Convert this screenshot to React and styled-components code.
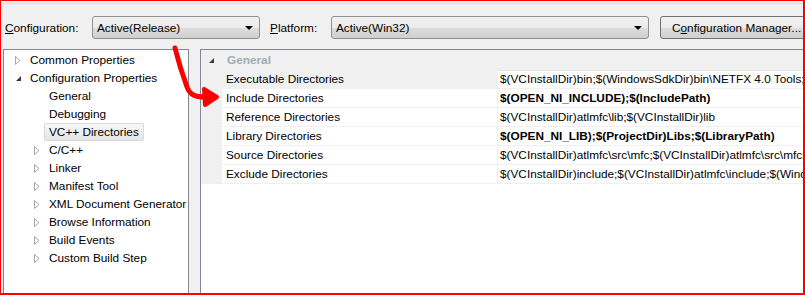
import React from 'react';
import styled, { createGlobalStyle } from 'styled-components';

const GlobalStyle = createGlobalStyle`
  html, body {
    margin: 0;
    padding: 0;
    background: #f0f0f0;
  }
`;

const treeItems = [
  { label: 'Common Properties', level: 0, state: 'collapsed' },
  { label: 'Configuration Properties', level: 0, state: 'expanded' },
  { label: 'General', level: 1 },
  { label: 'Debugging', level: 1 },
  { label: 'VC++ Directories', level: 1, selected: true },
  { label: 'C/C++', level: 1, state: 'collapsed' },
  { label: 'Linker', level: 1, state: 'collapsed' },
  { label: 'Manifest Tool', level: 1, state: 'collapsed' },
  { label: 'XML Document Generator', level: 1, state: 'collapsed' },
  { label: 'Browse Information', level: 1, state: 'collapsed' },
  { label: 'Build Events', level: 1, state: 'collapsed' },
  { label: 'Custom Build Step', level: 1, state: 'collapsed' },
];

const props = [
  {
    name: 'Executable Directories',
    value:
      '$(VCInstallDir)bin;$(WindowsSdkDir)bin\\NETFX 4.0 Tools;$(WindowsSdkDir)bin;$(VSInstallDir)Common7\\Tools\\bin;',
    current: true,
  },
  { name: 'Include Directories', value: '$(OPEN_NI_INCLUDE);$(IncludePath)', bold: true },
  { name: 'Reference Directories', value: '$(VCInstallDir)atlmfc\\lib;$(VCInstallDir)lib' },
  { name: 'Library Directories', value: '$(OPEN_NI_LIB);$(ProjectDir)Libs;$(LibraryPath)', bold: true },
  {
    name: 'Source Directories',
    value: '$(VCInstallDir)atlmfc\\src\\mfc;$(VCInstallDir)atlmfc\\src\\mfcm;$(VCInstallDir)atlmfc\\src\\atl;',
  },
  {
    name: 'Exclude Directories',
    value: '$(VCInstallDir)include;$(VCInstallDir)atlmfc\\include;$(WindowsSdkDir)include;',
  },
];

function Expander({ state }) {
  if (state === 'expanded') {
    return (
      <ExpanderBox>
        <svg width="7" height="7" viewBox="0 0 7 7">
          <polygon points="6,1 6,6 1,6" fill="#3a3a3a" />
        </svg>
      </ExpanderBox>
    );
  }
  if (state === 'collapsed') {
    return (
      <ExpanderBox>
        <svg width="6" height="9" viewBox="0 0 6 9">
          <polygon points="0.5,0.5 5,4.5 0.5,8.5" fill="#fff" stroke="#a6a6a6" />
        </svg>
      </ExpanderBox>
    );
  }
  return <ExpanderBox />;
}

function Combo({ value, width }) {
  return (
    <ComboBox $width={width}>
      <span>{value}</span>
      <svg width="8" height="4" viewBox="0 0 8 4">
        <polygon points="0,0 8,0 4,4" fill="#000" />
      </svg>
    </ComboBox>
  );
}

function App() {
  return (
    <>
      <GlobalStyle />
      <Frame>
        <Toolbar>
          <Label $width={87}>
            <u>C</u>onfiguration:
          </Label>
          <Combo value="Active(Release)" width={168} />
          <Label $gap={10} $width={61}>
            <u>P</u>latform:
          </Label>
          <Combo value="Active(Win32)" width={318} />
          <Button>
            C<u>o</u>nfiguration Manager...
          </Button>
        </Toolbar>
        <Panes>
          <TreePanel>
            {treeItems.map((item) => (
              <TreeRow key={item.label} $level={item.level}>
                <Expander state={item.state} />
                <TreeLabel $selected={item.selected}>{item.label}</TreeLabel>
              </TreeRow>
            ))}
          </TreePanel>
          <GridPanel>
            <CategoryRow>
              <Gutter>
                <svg width="7" height="7" viewBox="0 0 7 7">
                  <polygon points="6,1 6,6 1,6" fill="#3a3a3a" />
                </svg>
              </Gutter>
              <CategoryName>General</CategoryName>
            </CategoryRow>
            {props.map((p) => (
              <PropRow key={p.name}>
                <Gutter />
                <NameCell $current={p.current}>{p.name}</NameCell>
                <ValueCell $bold={p.bold} $current={p.current}>
                  {p.value}
                </ValueCell>
              </PropRow>
            ))}
          </GridPanel>
        </Panes>
        <Arrow width="805" height="295" viewBox="0 0 805 295">
          <path
            d="M175 48 C178 60 183 76 187 87 C190 95 195 97 205 97"
            fill="none"
            stroke="#ff0000"
            strokeWidth="5"
            strokeLinecap="round"
          />
          <polygon
            points="204,89 217,97 205,105"
            fill="#ff0000"
            stroke="#ff0000"
            strokeWidth="4"
            strokeLinejoin="round"
          />
        </Arrow>
      </Frame>
    </>
  );
}

const Frame = styled.div`
  position: relative;
  box-sizing: border-box;
  width: 805px;
  height: 295px;
  padding: 2px 0 0 2px;
  border-top: 1px solid #ff0000;
  border-left: 1px solid #ff0000;
  border-right: 2px solid #ff0000;
  border-bottom: 2px solid #ff0000;
  overflow: hidden;
  background: #f0f0f0;
  font-family: 'Liberation Sans', Arial, sans-serif;
  font-size: 11.8px;
  color: #000;
`;

const Toolbar = styled.div`
  display: flex;
  align-items: center;
  height: 23px;
  padding: 12px 0 0 2px;
  border-top: 1px solid #d9dde2;
  white-space: nowrap;
`;

const Label = styled.span`
  margin-left: ${(p) => p.$gap || 0}px;
  width: ${(p) => p.$width}px;
  flex-shrink: 0;
  u {
    text-decoration: underline;
  }
`;

const ComboBox = styled.div`
  box-sizing: border-box;
  display: flex;
  align-items: center;
  justify-content: space-between;
  width: ${(p) => p.$width}px;
  height: 23px;
  padding: 0 6px 0 4px;
  border: 1px solid #8e8f8f;
  border-radius: 3px;
  background: linear-gradient(#f2f2f2 0%, #ebebeb 50%, #dddddd 51%, #cfcfcf 100%);
  flex-shrink: 0;
  svg {
    flex-shrink: 0;
  }
`;

const Button = styled.div`
  box-sizing: border-box;
  display: flex;
  align-items: center;
  flex-shrink: 0;
  margin-left: 11px;
  width: 150px;
  height: 23px;
  padding-left: 11px;
  border: 1px solid #707070;
  border-radius: 3px;
  background: linear-gradient(#f2f2f2 0%, #ebebeb 50%, #dddddd 51%, #cfcfcf 100%);
`;

const Panes = styled.div`
  display: flex;
  gap: 11px;
  margin-top: 10px;
  height: 260px;
`;

const TreePanel = styled.div`
  box-sizing: border-box;
  width: 186px;
  flex-shrink: 0;
  padding-top: 1px;
  background: #fff;
  border: 1px solid #828790;
`;

const TreeRow = styled.div`
  display: flex;
  align-items: center;
  height: 18px;
  padding-left: ${(p) => 8 + p.$level * 19}px;
  white-space: nowrap;
`;

const ExpanderBox = styled.span`
  display: flex;
  align-items: center;
  justify-content: center;
  width: 12px;
  height: 18px;
  flex-shrink: 0;
`;

const TreeLabel = styled.span`
  margin-left: 1px;
  padding: 1px 4px;
  line-height: 14px;
  border: 1px solid ${(p) => (p.$selected ? '#d9d9d9' : 'transparent')};
  border-radius: 2px;
  background: ${(p) => (p.$selected ? 'linear-gradient(#f8f8f8, #e5e5e5)' : 'transparent')};
`;

const GridPanel = styled.div`
  box-sizing: border-box;
  width: 620px;
  flex-shrink: 0;
  background: #fff;
  border-top: 1px solid #828790;
  border-left: 1px solid #828790;
`;

const CategoryRow = styled.div`
  display: flex;
  align-items: center;
  height: 20px;
  background: #f0f0f0;
`;

const Gutter = styled.div`
  display: flex;
  align-items: center;
  justify-content: center;
  width: 21px;
  align-self: stretch;
  flex-shrink: 0;
  background: #f0f0f0;
`;

const CategoryName = styled.span`
  padding-left: 5px;
  font-weight: bold;
  color: #a2abb6;
`;

const PropRow = styled.div`
  display: flex;
  height: 19px;
  white-space: nowrap;
`;

const NameCell = styled.div`
  box-sizing: border-box;
  width: 276px;
  flex-shrink: 0;
  padding: 2px 0 0 4px;
  background: ${(p) => (p.$current ? '#f0f0f0' : '#fff')};
  border-bottom: 1px solid #f0f0f0;
  border-right: 1px solid #f0f0f0;
`;

const ValueCell = styled.div`
  box-sizing: border-box;
  flex: 1;
  overflow: hidden;
  padding: 2px 0 0 2px;
  font-weight: ${(p) => (p.$bold ? 'bold' : 'normal')};
  border-bottom: 1px solid #f0f0f0;
  border-top: ${(p) => (p.$current ? '1px solid #e6e6e6' : '0')};
  padding-top: ${(p) => (p.$current ? '1px' : '2px')};
`;

const Arrow = styled.svg`
  position: absolute;
  left: -1px;
  top: -1px;
  pointer-events: none;
`;

export default App;
